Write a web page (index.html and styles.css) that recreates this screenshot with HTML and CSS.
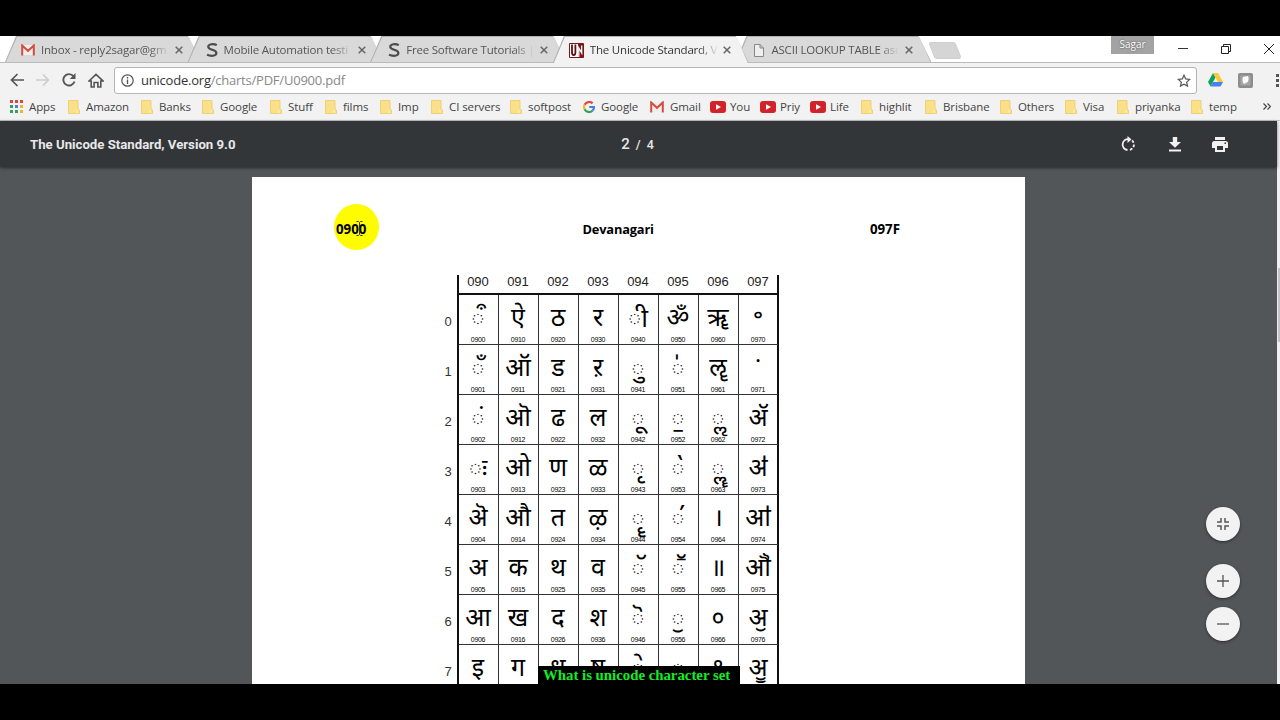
FILE: index.html
```html
<!DOCTYPE html>
<html lang="en">
<head>
  <meta charset="UTF-8">
  <title>The Unicode Standard, Version 9.0</title>
  <link rel="stylesheet" href="styles.css">
</head>
<body>
  <svg class="defs" width="0" height="0">
    <symbol id="gmail" viewBox="0 0 14 12">
      <path fill="#eee" d="M1 1h12v10H1z"/>
      <path fill="none" stroke="#d54b3d" stroke-width="2" d="M1.2 11.5V1.5L7 6.8l5.800-5.300v10"/>
    </symbol>
    <symbol id="folder" viewBox="0 0 12 14">
      <path fill="#fbe08a" stroke="#edc963" stroke-width=".8" d="M.5.5h9.500v8.500l1.500 1v3.500H.5z"/>
      <path fill="#fff0b5" d="M8.500 9.500h1v3.500h-1z"/>
    </symbol>
    <symbol id="youtube" viewBox="0 0 16 12">
      <rect width="16" height="12" rx="3" fill="#d2232a"/>
      <path fill="#fff" d="M6 3.300l5 2.700-5 2.700z"/>
    </symbol>
    <symbol id="close" viewBox="0 0 8 8">
      <path fill="none" stroke="#666" stroke-width="1.500" d="M.7.7l6.600 6.600M7.300.7L.7 7.300"/>
    </symbol>
    <symbol id="softpost" viewBox="0 0 12 14">
      <path fill="none" stroke="#4a4a4a" stroke-width="2.100" d="M10.800 2.200C8 .6 2.200.6 2.200 3.800c0 3.600 8.200 2.300 8.200 6.200 0 3.300-6 3.500-9.400 1.600"/>
    </symbol>
  </svg>

  <div class="browser">
    <div class="tab-strip">
      <div class="tab">
        <svg class="favicon" width="14" height="12"><use href="#gmail"/></svg>
        <span class="tab-title">Inbox - reply2sagar@gm</span>
        <svg class="tab-close" width="8" height="8"><use href="#close"/></svg>
      </div>
      <div class="tab">
        <svg class="favicon wide" width="12" height="14"><use href="#softpost"/></svg>
        <span class="tab-title">Mobile Automation testi</span>
        <svg class="tab-close" width="8" height="8"><use href="#close"/></svg>
      </div>
      <div class="tab">
        <svg class="favicon wide" width="12" height="14"><use href="#softpost"/></svg>
        <span class="tab-title">Free Software Tutorials |</span>
        <svg class="tab-close" width="8" height="8"><use href="#close"/></svg>
      </div>
      <div class="tab active">
        <svg class="favicon" width="15" height="15" viewBox="0 0 15 15">
          <path fill="#fff" stroke="#7a1519" d="M.5.5h14v14H.5z"/>
          <path fill="#7a1519" d="M9 1h5.500v13.500H9z"/>
          <path fill="none" stroke="#5c1114" stroke-width="1.800" d="M3 1.500v8q0 2.500 1.700 2.500t1.700-2.500v-8"/>
          <path fill="none" stroke="#fff" stroke-width="1.300" d="M9.800 14V5l2.900 5V2.500"/>
        </svg>
        <span class="tab-title">The Unicode Standard, Ve</span>
        <svg class="tab-close" width="8" height="8"><use href="#close"/></svg>
      </div>
      <div class="tab">
        <svg class="favicon wide" width="12" height="13" viewBox="-1 0 12 13">
          <path fill="#eee" stroke="#888" d="M.5.5H6L9.500 4v8.500h-9zM6 .5V4h3.500"/>
        </svg>
        <span class="tab-title">ASCII LOOKUP TABLE asc</span>
        <svg class="tab-close" width="8" height="8"><use href="#close"/></svg>
      </div>
      <svg class="new-tab" width="34" height="17" viewBox="0 0 34 17">
        <path fill="#d5d5d5" stroke="#cecece" d="M2.500.5h23q1.500 0 2 1.500l5 12.500q.5 2-1.500 2H9q-2 0-2.500-1.500l-5-13q-.3-1.500 1-1.500z"/>
      </svg>
      <div class="window-controls">
        <span class="user">Sagar</span>
        <svg width="10" height="10" viewBox="0 0 10 10"><path stroke="#333" d="M0 4.500h10"/></svg>
        <svg width="10" height="10" viewBox="0 0 10 10"><path fill="none" stroke="#222" d="M.5 2.500h7v7h-7zM2.500 2.500v-2h7v7h-2"/></svg>
        <svg width="10" height="10" viewBox="0 0 10 10"><path stroke="#222" d="M0 0l10 10M10 0L0 10"/></svg>
      </div>
    </div>

    <div class="toolbar">
      <svg width="14" height="14" viewBox="0 0 14 14"><path fill="none" stroke="#555" stroke-width="1.700" d="M14 7H1.500M7.500 1L1.500 7l6 6"/></svg>
      <svg width="14" height="14" viewBox="0 0 14 14"><path fill="none" stroke="#ccc" stroke-width="1.500" d="M0 7h12.500M7 1.500L12.500 7 7 12.500"/></svg>
      <svg width="14" height="14" viewBox="0 0 14 14"><path fill="none" stroke="#555" stroke-width="1.900" d="M11.500 3.200A5.700 5.700 0 1 0 12.500 8.500"/><path fill="#555" d="M13.500 0v6H7.800z"/></svg>
      <svg width="16" height="15" viewBox="0 0 16 15"><path fill="none" stroke="#555" stroke-width="1.600" d="M1 8l7-6.700L15 8h-2.200v6H9.900V9.500H6.100V14H3.200V8z"/></svg>
      <div class="address">
        <svg width="13" height="13" viewBox="0 0 13 13"><circle cx="6.500" cy="6.500" r="5.700" fill="none" stroke="#555" stroke-width="1.200"/><path stroke="#555" stroke-width="1.400" d="M6.500 5.500V10M6.500 3v1.500"/></svg>
        <span class="url"><b>unicode.org</b>/charts/PDF/U0900.pdf</span>
        <svg width="14" height="13" viewBox="0 0 14 13"><path fill="none" stroke="#555" stroke-width="1.200" d="M7 1.200l1.700 3.700 4 .5-3 2.700.8 4L7 10.200l-3.500 1.900.8-4-3-2.700 4-.5z"/></svg>
      </div>
      <svg class="drive" width="15" height="14" viewBox="0 0 15 14">
        <path fill="#11a05c" d="M5 0L0 9l2.500 4.500 5-9z"/>
        <path fill="#fbc933" d="M5 0h5l5 9h-5z"/>
        <path fill="#4482ec" d="M5 9h10l-2.500 4.500h-10z"/>
      </svg>
      <svg class="extension" width="15" height="15" viewBox="0 0 15 15"><rect width="15" height="15" rx="2" fill="#8d8d8d"/><path fill="#a5a5a5" d="M2.500 2.500h10v10h-10z"/><path fill="#fff" d="M5 4l5-1q1.500 4-1 6.500L6 11Q3.500 8 5 4z"/></svg>
      <svg class="menu" width="4" height="14" viewBox="0 0 4 14"><path fill="#555" d="M0 1h3v3H0zM0 6h3v3H0zM0 11h3v3H0z"/></svg>
    </div>

    <div class="bookmarks">
      <span><svg width="13" height="13" viewBox="0 0 13 13"><path fill="#d9483b" d="M0 0h3v3H0zM5 0h3v3H5zM10 0h3v3h-3z"/><path fill="#32a05f" d="M0 5h3v3H0zM0 10h3v3H0z"/><path fill="#4a7fd6" d="M5 5h3v3H5z"/><path fill="#32a05f" d="M5 10h3v3H5z"/><path fill="#edb52f" d="M10 5h3v3h-3zM10 10h3v3h-3z"/></svg>Apps</span>
      <span><svg width="12" height="14"><use href="#folder"/></svg>Amazon</span>
      <span><svg width="12" height="14"><use href="#folder"/></svg>Banks</span>
      <span><svg width="12" height="14"><use href="#folder"/></svg>Google</span>
      <span><svg width="12" height="14"><use href="#folder"/></svg>Stuff</span>
      <span><svg width="12" height="14"><use href="#folder"/></svg>films</span>
      <span><svg width="12" height="14"><use href="#folder"/></svg>Imp</span>
      <span><svg width="12" height="14"><use href="#folder"/></svg>CI servers</span>
      <span><svg width="12" height="14"><use href="#folder"/></svg>softpost</span>
      <span><svg width="12" height="12" viewBox="0 0 12 12"><g fill="none" stroke-width="2.200"><path stroke="#e04a3a" d="M1.600 3.800A5 5 0 0 1 9.600 2.400"/><path stroke="#f3b72c" d="M1.600 8.200a5 5 0 0 1 0-4.400"/><path stroke="#34a060" d="M9.400 9.700a5 5 0 0 1-7.800-1.500"/><path stroke="#4a80df" d="M6.200 6H11q0 2.300-1.600 3.700"/></g></svg>Google</span>
      <span><svg width="14" height="12"><use href="#gmail"/></svg>Gmail</span>
      <span><svg width="16" height="12"><use href="#youtube"/></svg>You</span>
      <span><svg width="16" height="12"><use href="#youtube"/></svg>Priy</span>
      <span><svg width="16" height="12"><use href="#youtube"/></svg>Life</span>
      <span><svg width="12" height="14"><use href="#folder"/></svg>highlit</span>
      <span><svg width="12" height="14"><use href="#folder"/></svg>Brisbane</span>
      <span><svg width="12" height="14"><use href="#folder"/></svg>Others</span>
      <span><svg width="12" height="14"><use href="#folder"/></svg>Visa</span>
      <span><svg width="12" height="14"><use href="#folder"/></svg>priyanka</span>
      <span><svg width="12" height="14"><use href="#folder"/></svg>temp</span>
      <span><svg class="more" width="8" height="7" viewBox="0 0 8 7"><path fill="none" stroke="#444" stroke-width="1.200" d="M.5.5l3 3-3 3M4.500.5l3 3-3 3"/></svg></span>
    </div>

    <div class="content">
      <div class="viewer">
        <div class="pdf-bar">
          <span class="pdf-title">The Unicode Standard, Version 9.0</span>
          <span class="pdf-pages"><span>2</span> / 4</span>
          <div class="pdf-actions">
            <svg width="15" height="16" viewBox="0 0 15 16"><path fill="none" stroke="#f1f1f1" stroke-width="1.800" d="M6.500 14A5.400 5.400 0 0 1 7.500 3.200"/><path fill="#f1f1f1" d="M6.500 0l4 3.500-4 3.500z"/><path fill="none" stroke="#f1f1f1" stroke-width="1.800" stroke-dasharray="2.800 1.600" d="M11 4.500a5.400 5.400 0 0 1-3 9.500"/></svg>
            <svg width="12" height="15" viewBox="0 0 12 15"><path fill="#f1f1f1" d="M3.800 0h4.400v5H12L6 10.800 0 5h3.800zM0 12.500h12v2H0z"/></svg>
            <svg width="16" height="15" viewBox="0 0 16 15"><path fill="#f1f1f1" d="M3 0h10v3H3zM2.500 4h11Q16 4 16 6.500V11h-3v4H3v-4H0V6.500Q0 4 2.500 4z"/><path fill="#323639" d="M5 9h6v4H5zM12.500 5.500h1.500V7h-1.500z"/></svg>
          </div>
        </div>

        <div class="page">
          <div class="page-head">
            <span class="range-start">0900</span>
            <span class="block-name">Devanagari</span>
            <span>097F</span>
            <svg class="cursor" width="7" height="15" viewBox="0 0 7 15"><path fill="none" stroke="#334" d="M.5.5h2l1 1 1-1h2M3.500 1.500v12M.5 14.500h2l1-1 1 1h2"/></svg>
          </div>
          <div class="chart">
            <div class="row-labels" id="rowLabels"></div>
            <div class="code-table">
              <div class="code-head" id="codeHead"></div>
              <div class="code-grid" id="codeGrid"></div>
            </div>
          </div>
        </div>

        <div class="zoom-buttons">
          <button><svg width="12" height="12" viewBox="0 0 12 12"><path fill="none" stroke="#555" stroke-width="1.500" d="M0 4h4V0M8 0v4h4M0 8h4v4M12 8H8v4"/></svg></button>
          <button><svg width="12" height="12" viewBox="0 0 12 12"><path stroke="#555" stroke-width="1.300" d="M0 6h12M6 0v12"/></svg></button>
          <button><svg width="12" height="12" viewBox="0 0 12 12"><path stroke="#555" stroke-width="1.300" d="M0 6h12"/></svg></button>
        </div>
      </div>
      <div class="scrollbar"><div class="thumb"></div></div>
    </div>
  </div>

  <div class="caption">What is unicode character set</div>

  <script>
    // Devanagari block, 8 columns x 8 rows
    const head = document.getElementById('codeHead');
    const grid = document.getElementById('codeGrid');
    const labels = document.getElementById('rowLabels');

    for (let col = 0; col < 8; col++) {
      head.innerHTML += `<span>09${col}</span>`;
    }

    for (let row = 0; row < 8; row++) {
      labels.innerHTML += `<span>${row}</span>`;
      for (let col = 0; col < 8; col++) {
        const code = 0x900 + col * 16 + row;
        const ch = String.fromCodePoint(code);
        // marks need a dotted circle to sit on
        const mark = /\p{M}/u.test(ch);
        const glyph = mark ? '\u25cc' + ch : ch;
        const hex = '0' + code.toString(16).toUpperCase();
        grid.innerHTML += `<div class="cell"><span class="glyph${mark ? ' mark' : ''}">${glyph}</span><span class="code">${hex}</span></div>`;
      }
    }
  </script>
</body>
</html>
```

FILE: styles.css
```css
* {
  box-sizing: border-box;
}
body {
  margin: 0;
  padding: 36px 0;
  height: 720px;
  background: #000;
  overflow: hidden;
  font-family: "Open Sans", "Noto Sans", sans-serif;
}
svg {
  display: block;
  flex: none;
}
.defs {
  position: absolute;
}
.browser {
  height: 648px;
  background: #f2f2f2;
  overflow: hidden;
}

/* tabs */
.tab-strip {
  display: flex;
  height: 27px;
  padding-left: 5px;
  background: #fff;
  border-bottom: 1px solid #bbb;
}
.tab {
  position: relative;
  z-index: 0;
  display: flex;
  align-items: center;
  width: 196px;
  height: 26px;
  margin-right: -13.4px;
  padding: 2px 0 0 16px;
}
.tab::before,
.tab::after {
  content: "";
  position: absolute;
  inset: 0;
  z-index: -2;
  background: #b0b0b0;
  clip-path: polygon(0 100%, 11px 0, 183px 0, 100% 100%);
}
.tab::after {
  inset: 1px 1px 0;
  z-index: -1;
  background: #d9d9d9;
}
.tab.active {
  z-index: 1;
  height: 27px;
  padding-top: 1px;
}
.tab.active::after {
  background: #f2f2f2;
}
.favicon {
  margin-right: 6px;
}
.favicon.wide {
  margin: 0 6px 0 2px;
}
.tab-title {
  width: 127px;
  white-space: nowrap;
  font-size: 11.5px;
  letter-spacing: -.2px;
  line-height: 18px;
  color: #555;
  mask-image: linear-gradient(to right, #000 85%, transparent 101%);
}
.active .tab-title {
  color: #333;
}
.tab-close {
  position: relative;
  margin-left: auto;
  right: 18px;
}
.new-tab {
  margin: 6px 0 0 10px;
}
.window-controls {
  display: flex;
  align-items: center;
  margin-left: auto;
  padding-right: 6px;
  gap: 33px;
}
.user {
  align-self: flex-start;
  width: 43px;
  height: 18px;
  margin-right: -9px;
  background: #a3a3a3;
  color: #fff;
  font-size: 10px;
  line-height: 17px;
  text-align: center;
  text-shadow: 0 0 2px #444;
}

/* address bar */
.toolbar {
  display: flex;
  align-items: center;
  height: 35px;
  padding: 0 0 1px 10px;
  gap: 12px;
}
.address {
  display: flex;
  align-items: center;
  width: 1086px;
  height: 27px;
  margin-left: -2px;
  padding: 0 5px 0 6px;
  background: #fff;
  border: 1px solid #b5b5b5;
  border-radius: 3px;
}
.url {
  margin: 0 auto 0 7px;
  font-size: 13px;
  letter-spacing: -.22px;
  color: #888;
}
.url b {
  font-weight: normal;
  color: #333;
}
.drive {
  margin-left: -1px;
}
.extension {
  margin-left: 3px;
}
.menu {
  margin-left: 11px;
}

/* bookmarks */
.bookmarks {
  display: grid;
  grid-template-columns: 58px 73px 61px 68px 55px 55px 51px 79px 73px 67px 60px 50px 50px 51px 64px 75px 65px 52px 74px 72px 17px;
  align-items: center;
  height: 23px;
  padding: 0 0 5px 10px;
  border-bottom: 1px solid #c4c4c4;
  font-size: 11.5px;
  letter-spacing: -.1px;
  line-height: 16px;
  color: #444;
}
.bookmarks span {
  display: flex;
  align-items: center;
  white-space: nowrap;
}
.bookmarks svg {
  margin-right: 6px;
}
.bookmarks svg[width="16"] {
  margin-right: 4px;
}

/* pdf viewer */
.content {
  display: flex;
}
.scrollbar {
  width: 3px;
  height: 563px;
  padding: 147px 0 0 1px;
  background: #f0eff2;
}
.thumb {
  height: 74px;
  background: #c4c4c8;
}
.viewer {
  position: relative;
  width: 1277px;
  height: 563px;
  background: #525659;
}
.pdf-bar {
  display: grid;
  grid-template-columns: 1fr 1fr 1fr;
  align-items: center;
  height: 46px;
  padding: 0 49px 0 30px;
  background: #323639;
  box-shadow: 0 1px 3px rgba(0, 0, 0, .5);
  color: #e8e8e8;
  font-family: Roboto, sans-serif;
}
.pdf-title {
  font-size: 13.2px;
  font-weight: 700;
  white-space: nowrap;
}
.pdf-pages {
  padding-left: 17px;
  text-align: center;
  font-size: 12.5px;
  font-weight: 500;
  word-spacing: 3px;
}
.pdf-pages span {
  font-size: 15px;
}
.pdf-actions {
  display: flex;
  align-items: center;
  justify-content: flex-end;
  gap: 31px;
}
.pdf-actions svg:first-child {
  margin-right: 2px;
}
.page {
  width: 773px;
  height: 507px;
  margin: 10px 0 0 252px;
  background: #fff;
  overflow: hidden;
}
.page-head {
  position: relative;
  z-index: 0;
  display: flex;
  justify-content: space-between;
  padding: 42px 125px 0 84px;
  font-family: "Open Sans", sans-serif;
  font-size: 13.3px;
  font-weight: 700;
  line-height: 20px;
  color: #000;
}
.range-start::before {
  content: "";
  position: absolute;
  left: 82px;
  top: 27px;
  width: 45px;
  height: 46px;
  border-radius: 50%;
  background: #fffb00;
  z-index: -1;
}
.block-name {
  font-size: 12.8px;
  letter-spacing: -.15px;
}
.cursor {
  position: absolute;
  left: 104px;
  top: 44px;
}

/* code chart */
.chart {
  display: flex;
  margin: 36px 0 0 185px;
  font-family: "Liberation Sans", sans-serif;
  color: #000;
}
.row-labels {
  width: 20px;
  padding: 20px 0 0 2px;
}
.row-labels span {
  display: block;
  height: 50px;
  padding-top: 2px;
  line-height: 50px;
  font-size: 13px;
  text-align: center;
  color: #333;
}
.code-table {
  width: 322px;
  border-left: 2px solid #111;
  border-right: 2px solid #111;
}
.code-head {
  display: grid;
  grid-template-columns: repeat(8, 40px);
  width: 318px;
  height: 20px;
  border-bottom: 2px solid #111;
  font-size: 13px;
  line-height: 14px;
  text-align: center;
  text-indent: -2px;
  color: #222;
}
.code-grid {
  display: grid;
  grid-template-columns: repeat(8, 40px);
}
.cell {
  display: flex;
  flex-direction: column;
  align-items: center;
  height: 50px;
  padding-right: 1px;
  border-right: 1px solid #333;
  border-bottom: 1px solid #333;
}
.cell:nth-child(8n) {
  width: 39px;
  border-right: none;
}
.glyph {
  height: 40px;
  font-family: "Noto Sans Devanagari", "Lohit Devanagari", "Noto Sans", sans-serif;
  font-size: 25px;
  line-height: 50px;
}
.mark {
  font-size: 26px;
  line-height: 53px;
}
.code {
  font-size: 7px;
  line-height: 9px;
  letter-spacing: -.3px;
}

/* floating zoom controls */
.zoom-buttons {
  position: absolute;
  right: 37px;
  top: 386px;
  display: flex;
  flex-direction: column;
  gap: 9px;
}
.zoom-buttons button {
  display: flex;
  align-items: center;
  justify-content: center;
  width: 34px;
  height: 34px;
  padding: 0;
  border: none;
  border-radius: 50%;
  background: #f2f2f2;
  box-shadow: 0 1px 3px rgba(0, 0, 0, .5);
}
.zoom-buttons button:first-child {
  margin-bottom: 14px;
}

.caption {
  position: absolute;
  left: 538px;
  top: 666px;
  width: 202px;
  height: 19px;
  padding-left: 5px;
  background: #000;
  color: #12ee25;
  font: bold 14.8px/19px "Liberation Serif", serif;
  white-space: nowrap;
}
```
